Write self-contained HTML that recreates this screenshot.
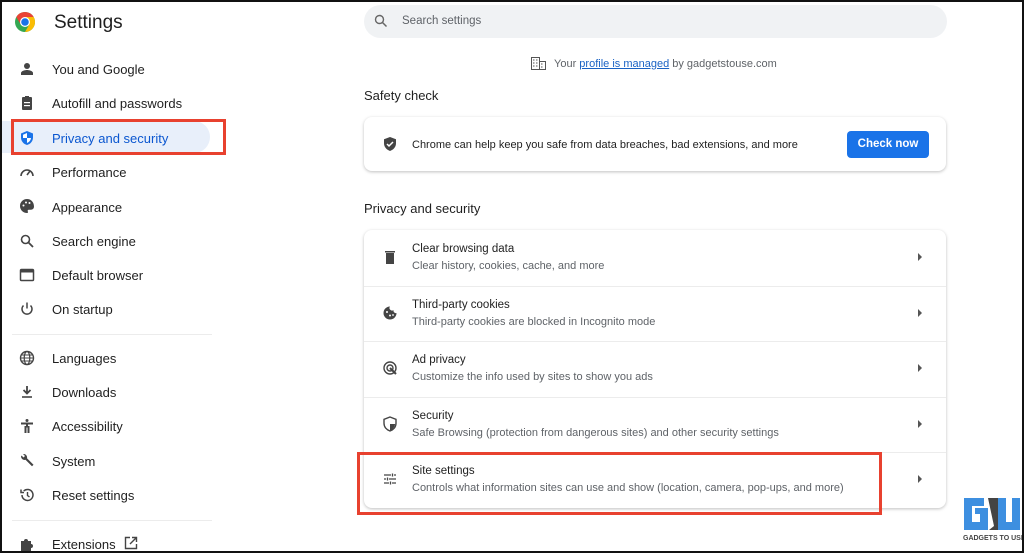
<!DOCTYPE html>
<html><head><meta charset="utf-8"><style>
*{margin:0;padding:0;box-sizing:border-box}
body{width:1024px;height:553px;overflow:hidden;background:#fff;font-family:"Liberation Sans",sans-serif;position:relative;color:#1f1f1f}
.frame{position:absolute;left:0;top:0;width:1024px;height:553px;border:2px solid #111;z-index:10;pointer-events:none}
.abs{position:absolute}
.nav{position:absolute;left:52px;font-size:13px;color:#1f1f1f;line-height:16px}
.ic{position:absolute;left:18px;width:18px;height:18px}
.div{position:absolute;left:12px;width:200px;height:1px;background:#ececec}
.card{position:absolute;left:364px;width:582px;background:#fff;border-radius:8px;box-shadow:0 1px 3px rgba(0,0,0,.25)}
.row{position:absolute;left:0;width:582px;height:56px}
.row .t1{position:absolute;left:48px;top:13px;font-size:11.5px;color:#1f1f1f}
.row .t2{position:absolute;left:48px;top:30px;font-size:11px;color:#5f6368}
.row .arr{position:absolute;right:24px;top:23px;width:0;height:0;border-left:4px solid #555;border-top:4px solid transparent;border-bottom:4px solid transparent}
.row .ri{position:absolute;left:18px;top:19px;width:16px;height:16px}
.sep{position:absolute;left:0;width:582px;height:1px;background:#ececec}
.red{position:absolute;border:3px solid #e8412f}
</style></head><body>
<div class="frame"></div>
<svg class="abs" style="left:14px;top:11px" width="22" height="22" viewBox="0 0 22 22">
<circle cx="11" cy="11" r="10" fill="#34a853"/>
<path d="M11 1A10 10 0 0 1 19.66 6H11L6.7 13.5 2.34 6A10 10 0 0 1 11 1Z" fill="#ea4335"/>
<path d="M19.66 6A10 10 0 0 1 11 21L15.3 13.5 11 6Z" fill="#fbbc04"/>
<circle cx="11" cy="11" r="5" fill="#fff"/><circle cx="11" cy="11" r="3.8" fill="#1a73e8"/></svg>
<div class="abs" style="left:54px;top:12px;font-size:19px;color:#1f1f1f">Settings</div>

<div class="abs" style="left:0;top:121px;width:210px;height:32px;background:#e8effa;border-radius:0 16px 16px 0"></div>
<div class="red" style="left:11px;top:119px;width:215px;height:36px"></div>

<svg class="ic" style="top:60px" viewBox="0 0 18 18"><circle cx="9" cy="6" r="3" fill="#444"/><path d="M3 15v-2c0-2 4-3 6-3s6 1 6 3v2z" fill="#444"/></svg>
<div class="nav" style="top:62px">You and Google</div>
<svg class="ic" style="top:94px" viewBox="0 0 18 18"><rect x="4" y="3" width="10" height="13" rx="1" fill="#444"/><rect x="7" y="2" width="4" height="3" fill="#444"/><rect x="6" y="8" width="6" height="1.2" fill="#fff"/><rect x="6" y="11" width="6" height="1.2" fill="#fff"/></svg>
<div class="nav" style="top:96px">Autofill and passwords</div>
<svg class="ic" style="top:129px" viewBox="0 0 18 18"><path d="M9 2l6 2.5v4c0 3.8-2.6 6.5-6 7.5-3.4-1-6-3.7-6-7.5v-4z" fill="#1a73e8"/><path d="M9 4v5H5V5.8zM9 9h4c-.3 2.5-2 4.3-4 5z" fill="#fff"/></svg>
<div class="nav" style="top:131px;color:#0b57d0">Privacy and security</div>
<svg class="ic" style="top:163px" viewBox="0 0 18 18"><path d="M3 13a6 6 0 1 1 12 0" fill="none" stroke="#444" stroke-width="1.6"/><path d="M9 12l3-4" stroke="#444" stroke-width="1.6"/></svg>
<div class="nav" style="top:165px">Performance</div>
<svg class="ic" style="top:197px" viewBox="0 0 18 18"><path d="M9 2a7 7 0 0 0 0 14c1 0 1.3-.8.8-1.5-.5-.8 0-1.8 1-1.8H13a3 3 0 0 0 3-3C16 5 13 2 9 2z" fill="#444"/><circle cx="5.5" cy="8.5" r="1" fill="#fff"/><circle cx="8" cy="5.5" r="1" fill="#fff"/><circle cx="11.5" cy="6" r="1" fill="#fff"/></svg>
<div class="nav" style="top:200px">Appearance</div>
<svg class="ic" style="top:232px" viewBox="0 0 18 18"><circle cx="7.5" cy="7.5" r="4" fill="none" stroke="#444" stroke-width="1.6"/><path d="M10.5 10.5l4.5 4.5" stroke="#444" stroke-width="1.8"/></svg>
<div class="nav" style="top:234px">Search engine</div>
<svg class="ic" style="top:266px" viewBox="0 0 18 18"><rect x="2.5" y="3.5" width="13" height="11" rx="1" fill="none" stroke="#444" stroke-width="1.5"/><rect x="2.5" y="3.5" width="13" height="3" fill="#444"/></svg>
<div class="nav" style="top:268px">Default browser</div>
<svg class="ic" style="top:300px" viewBox="0 0 18 18"><path d="M5.5 5.5a5 5 0 1 0 7 0" fill="none" stroke="#444" stroke-width="1.5"/><path d="M9 2.5v6" stroke="#444" stroke-width="1.5"/></svg>
<div class="nav" style="top:302px">On startup</div>
<div class="div" style="top:334px"></div>
<svg class="ic" style="top:349px" viewBox="0 0 18 18"><circle cx="9" cy="9" r="6.5" fill="none" stroke="#444" stroke-width="1.4"/><ellipse cx="9" cy="9" rx="2.8" ry="6.5" fill="none" stroke="#444" stroke-width="1.2"/><path d="M2.5 9h13M3.5 6h11M3.5 12h11" stroke="#444" stroke-width="1.1"/></svg>
<div class="nav" style="top:351px">Languages</div>
<svg class="ic" style="top:383px" viewBox="0 0 18 18"><path d="M9 3v7M5.5 7l3.5 3.5L12.5 7" fill="none" stroke="#444" stroke-width="1.8"/><path d="M4 14h10" stroke="#444" stroke-width="1.6"/></svg>
<div class="nav" style="top:385px">Downloads</div>
<svg class="ic" style="top:417px" viewBox="0 0 18 18"><circle cx="9" cy="3.5" r="1.5" fill="#444"/><path d="M3 6.5h12M9 6.5v4M7.5 16V9M10.5 16V9" stroke="#444" stroke-width="2"/></svg>
<div class="nav" style="top:419px">Accessibility</div>
<svg class="ic" style="top:452px" viewBox="0 0 18 18"><path d="M3 4.5a3.5 3.5 0 0 0 4.5 3.3l6.5 6.5 1.5-1.5L9 6.3A3.5 3.5 0 0 0 5 2l2 2-1.5 1.5-2-2z" fill="#444"/></svg>
<div class="nav" style="top:454px">System</div>
<svg class="ic" style="top:486px" viewBox="0 0 18 18"><path d="M4 9a5.5 5.5 0 1 0 1.7-4" fill="none" stroke="#444" stroke-width="1.5"/><path d="M3 3.5v3h3" fill="none" stroke="#444" stroke-width="1.5"/><path d="M9.5 6v3.5l2 1.5" fill="none" stroke="#444" stroke-width="1.4"/></svg>
<div class="nav" style="top:488px">Reset settings</div>
<div class="div" style="top:520px"></div>
<svg class="ic" style="top:535px" viewBox="0 0 18 18"><path d="M3 6h3a2 2 0 1 1 4 0h3v3a2 2 0 1 1 0 4v4H3z" fill="#444"/></svg>
<div class="nav" style="top:537px">Extensions</div>
<svg class="abs" style="left:124px;top:536px" width="14" height="14" viewBox="0 0 14 14"><path d="M6 1.5H1.5v11h11V8" fill="none" stroke="#444" stroke-width="1.4"/><path d="M8 1.5h4.5V6M12.5 1.5L6 8" fill="none" stroke="#444" stroke-width="1.4"/></svg>

<div class="abs" style="left:364px;top:5px;width:583px;height:33px;border-radius:17px;background:#f0f2f4"></div>
<svg class="abs" style="left:374px;top:14px" width="14" height="14" viewBox="0 0 14 14"><circle cx="5.5" cy="5.5" r="4" fill="none" stroke="#666" stroke-width="1.4"/><path d="M8.5 8.5l4 4" stroke="#666" stroke-width="1.5"/></svg>
<div class="abs" style="left:402px;top:15px;font-size:11.5px;color:#5f6368">Search settings</div>

<svg class="abs" style="left:531px;top:57px" width="15" height="13" viewBox="0 0 15 13"><rect x="0.5" y="0.5" width="8" height="12" fill="none" stroke="#555"/><rect x="8.5" y="4.5" width="6" height="8" fill="none" stroke="#555"/><path d="M2 3h1.5M5 3h1.5M2 6h1.5M5 6h1.5M2 9h1.5M5 9h1.5M10 7h1.5M10 10h1.5" stroke="#555"/></svg>
<div class="abs" style="left:554px;top:58px;font-size:11px;color:#5f6368">Your <span style="color:#1a62c4;text-decoration:underline">profile is managed</span> by gadgetstouse.com</div>

<div class="abs" style="left:364px;top:88px;font-size:13px;color:#1f1f1f">Safety check</div>
<div class="card" style="top:117px;height:54px">
<svg class="abs" style="left:18px;top:19px" width="16" height="16" viewBox="0 0 16 16"><path d="M8 1l6 2.3v4C14 11 11.5 13.8 8 15 4.5 13.8 2 11 2 7.3v-4z" fill="#444"/><path d="M5 8l2 2 4-4" fill="none" stroke="#fff" stroke-width="1.5"/></svg>
<div class="abs" style="left:48px;top:22px;font-size:11px;color:#1f1f1f">Chrome can help keep you safe from data breaches, bad extensions, and more</div>
<div class="abs" style="left:483px;top:14px;width:82px;height:27px;background:#1a73e8;border-radius:4px;color:#fff;font-size:11.5px;font-weight:bold;text-align:center;line-height:27px">Check now</div>
</div>

<div class="abs" style="left:364px;top:201px;font-size:13px;color:#1f1f1f">Privacy and security</div>
<div class="card" style="top:230px;height:278px">
<div class="row" style="top:0"><svg class="ri" viewBox="0 0 16 16"><rect x="4" y="4" width="8" height="11" fill="#444"/><rect x="3" y="2" width="10" height="1.5" fill="#444"/></svg><div class="t1">Clear browsing data</div><div class="t2">Clear history, cookies, cache, and more</div><div class="arr"></div></div>
<div class="sep" style="top:56px"></div>
<div class="row" style="top:56px"><svg class="ri" viewBox="0 0 16 16"><path d="M8 1.5a6.5 6.5 0 1 0 6.5 6.5 2.5 2.5 0 0 1-3-3 2.5 2.5 0 0 1-3.5-3.5z" fill="#444"/><circle cx="5" cy="7" r="1" fill="#fff"/><circle cx="8" cy="10.5" r="1" fill="#fff"/><circle cx="11" cy="10" r=".9" fill="#fff"/></svg><div class="t1">Third-party cookies</div><div class="t2">Third-party cookies are blocked in Incognito mode</div><div class="arr"></div></div>
<div class="sep" style="top:111px"></div>
<div class="row" style="top:111px"><svg class="ri" viewBox="0 0 16 16"><circle cx="8" cy="8" r="6" fill="none" stroke="#444" stroke-width="1.4"/><circle cx="8" cy="8" r="3" fill="none" stroke="#444" stroke-width="1.4"/><path d="M8 8l6 6" stroke="#444" stroke-width="2"/></svg><div class="t1">Ad privacy</div><div class="t2">Customize the info used by sites to show you ads</div><div class="arr"></div></div>
<div class="sep" style="top:167px"></div>
<div class="row" style="top:167px"><svg class="ri" viewBox="0 0 16 16"><path d="M8 1l6 2.3v4C14 11 11.5 13.8 8 15 4.5 13.8 2 11 2 7.3v-4z" fill="none" stroke="#444" stroke-width="1.4"/><path d="M8 2v12.5C11 13.3 13 11 13 8H8z" fill="#444"/></svg><div class="t1">Security</div><div class="t2">Safe Browsing (protection from dangerous sites) and other security settings</div><div class="arr"></div></div>
<div class="sep" style="top:222px"></div>
<div class="row" style="top:222px"><svg class="ri" viewBox="0 0 16 16"><path d="M2 4h7M12 4h2M2 8h2M7 8h7M2 12h5M10 12h4M10.5 2.5v3M5.5 6.5v3M8.5 10.5v3" stroke="#444" stroke-width="1.3"/></svg><div class="t1">Site settings</div><div class="t2">Controls what information sites can use and show (location, camera, pop-ups, and more)</div><div class="arr"></div></div>
</div>
<div class="red" style="left:357px;top:452px;width:525px;height:63px"></div>

<svg class="abs" style="left:962px;top:496px" width="60" height="46" viewBox="0 0 60 46">
<path d="M2 2h20v8H10v16h8v-8h-5v-6h13v22H2z" fill="#3d8fe0"/>
<path d="M26 2h10v32h-9l5-4z" fill="#444"/>
<path d="M36 2h8v24h6V2h8v32H36z" fill="#3d8fe0"/>
<text x="1" y="44" font-family="Liberation Sans" font-weight="bold" font-size="7" fill="#444">GADGETS TO USE</text>
</svg>
</body></html>
